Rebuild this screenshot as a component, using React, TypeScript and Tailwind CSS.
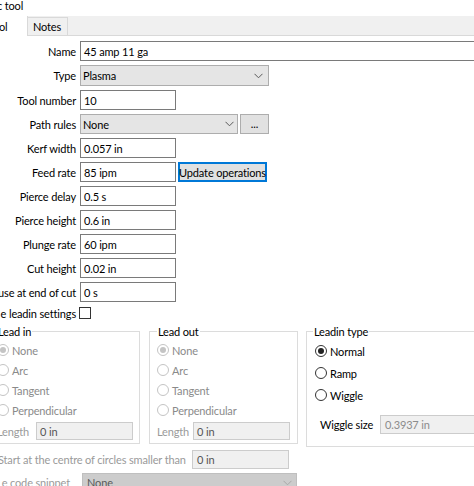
import React from "react";

function Chevron({ color = "#5a5a5a" }: { color?: string }) {
  return (
    <svg width="9" height="6" viewBox="0 0 9 6" className="shrink-0">
      <polyline points="0.5,0.8 4.5,4.8 8.5,0.8" fill="none" stroke={color} strokeWidth="1" />
    </svg>
  );
}

function Row({ label, children, tall }: { label: string; children: React.ReactNode; tall?: boolean }) {
  return (
    <div className={tall ? "flex items-center h-[21px]" : "flex items-center h-[20px]"}>
      <div className="w-[76px] shrink-0 flex justify-end whitespace-nowrap">
        <span>{label}</span>
      </div>
      <div className="ml-[4px] flex items-center">{children}</div>
    </div>
  );
}

function Input({ value, wide }: { value: string; wide?: boolean }) {
  return (
    <div
      className={
        wide
          ? "w-[400px] h-[20px] border border-[#7a7a7a] bg-white flex items-center pl-[3px] whitespace-nowrap"
          : "w-[96px] h-[20px] border border-[#7a7a7a] bg-white flex items-center pl-[3px] whitespace-nowrap"
      }
    >
      {value}
    </div>
  );
}

function Radio({ checked, disabled, label, tall }: { checked?: boolean; disabled?: boolean; label: string; tall?: boolean }) {
  return (
    <div className={tall ? "h-[22px] flex items-center" : "h-[20px] flex items-center"}>
      <span
        className={
          disabled
            ? "w-[12px] h-[12px] rounded-full border border-[#c4c4c4] bg-white flex items-center justify-center shrink-0"
            : "w-[12px] h-[12px] rounded-full border border-[#333333] bg-white flex items-center justify-center shrink-0"
        }
      >
        {checked && (
          <span className={disabled ? "w-[6px] h-[6px] rounded-full bg-[#c4c4c4]" : "w-[6px] h-[6px] rounded-full bg-[#222222]"} />
        )}
      </span>
      <span className={disabled ? "ml-[3px] text-[#8a8a8a]" : "ml-[3px] text-black"}>{label}</span>
    </div>
  );
}

function LeadGroup({ title, first }: { title: string; first?: boolean }) {
  return (
    <fieldset
      className={
        first
          ? "w-[151px] h-[120px] shrink-0 border border-[#dcdcdc] pl-[7px] pt-[1px]"
          : "w-[149px] h-[120px] shrink-0 border border-[#dcdcdc] pl-[7px] pt-[1px]"
      }
    >
      <legend className="px-[1px] leading-[15px] text-black">{title}</legend>
      <Radio checked disabled label="None" />
      <Radio disabled label="Arc" />
      <Radio disabled label="Tangent" />
      <Radio disabled label="Perpendicular" />
      <div className="mt-[2px] flex items-center h-[18px]">
        <span className={first ? "w-[39px] shrink-0 text-[#9a9a9a]" : "w-[36px] shrink-0 text-[#9a9a9a]"}>Length</span>
        <div className="w-[97px] h-[18px] border border-[#cccccc] bg-[#f0f0f0] flex items-center pl-[3px] text-[#555555]">
          0 in
        </div>
      </div>
    </fieldset>
  );
}

export default function App() {
  return (
    <div className="w-[474px] h-[486px] overflow-hidden bg-white text-[11px] tracking-[-0.15px] text-black font-['Lato',sans-serif] leading-[15px]">
      {/* title bar */}
      <div className="h-[18px] bg-white">
        <div className="ml-[-3px] mt-[-2px] whitespace-nowrap">c tool</div>
      </div>

      {/* tabs */}
      <div className="h-[20px] bg-[#f0f0f0] flex items-end border-b border-[#d9d9d9]">
        <div className="w-[28px] h-[20px] mb-[-1px] bg-white border-r border-[#d9d9d9] flex items-center">
          <span className="ml-[-1px]">ol</span>
        </div>
        <div className="w-[40px] h-[18px] border-t border-r border-[#d9d9d9] flex items-center pl-[5px]">Notes</div>
      </div>

      {/* form */}
      <div className="pt-[5px] flex flex-col gap-[4px]">
        <Row label="Name">
          <Input value="45 amp 11 ga" wide />
        </Row>
        <Row label="Type" tall>
          <div className="w-[189px] h-[21px] border border-[#adadad] bg-[#e5e5e5] flex items-center justify-between pl-[2px] pr-[5px]">
            <span>Plasma</span>
            <Chevron />
          </div>
        </Row>
        <Row label="Tool number">
          <Input value="10" />
        </Row>
        <Row label="Path rules">
          <div className="w-[158px] h-[20px] border border-[#adadad] bg-[#e5e5e5] flex items-center justify-between pl-[2px] pr-[3px]">
            <span>None</span>
            <Chevron />
          </div>
          <div className="ml-[2px] w-[29px] h-[20px] border border-[#adadad] bg-[#e1e1e1] flex items-center justify-center leading-[10px]">
            ...
          </div>
        </Row>
        <Row label="Kerf width">
          <Input value="0.057 in" />
        </Row>
        <Row label="Feed rate">
          <Input value="85 ipm" />
          <div className="ml-[2px] w-[89px] h-[20px] border-2 border-[#0078d7] bg-[#e1e1e1] flex items-center justify-center whitespace-nowrap">
            Update operations
          </div>
        </Row>
        <Row label="Pierce delay">
          <Input value="0.5 s" />
        </Row>
        <Row label="Pierce height">
          <Input value="0.6 in" />
        </Row>
        <Row label="Plunge rate">
          <Input value="60 ipm" />
        </Row>
        <Row label="Cut height">
          <Input value="0.02 in" />
        </Row>
        <Row label="use at end of cut">
          <Input value="0 s" />
        </Row>
        <div className="flex items-center h-[14px]">
          <div className="w-[76px] shrink-0 flex justify-end whitespace-nowrap">
            <span>e leadin settings</span>
          </div>
          <div className="ml-[3px] w-[12px] h-[12px] border border-[#333333] bg-white" />
        </div>
      </div>

      {/* group boxes */}
      <div className="mt-[4px] ml-[-11px] flex items-start">
        <LeadGroup title="Lead in" first />
        <div className="ml-[9px]">
          <LeadGroup title="Lead out" />
        </div>
        <fieldset className="ml-[8px] w-[190px] h-[123px] shrink-0 border border-[#dcdcdc] pl-[8px] pt-[1px]">
          <legend className="ml-[-2px] px-[1px] leading-[15px]">Leadin type</legend>
          <Radio checked label="Normal" tall />
          <Radio label="Ramp" tall />
          <Radio label="Wiggle" tall />
          <div className="mt-[9px] flex items-center h-[19px]">
            <span className="w-[65px] shrink-0 pl-[5px] whitespace-nowrap">Wiggle size</span>
            <div className="w-[110px] h-[19px] border border-[#cccccc] bg-[#f0f0f0] flex items-center pl-[4px] text-[#8c8c8c]">
              0.3937 in
            </div>
          </div>
        </fieldset>
      </div>

      {/* start at centre */}
      <div className="mt-[3px] ml-[-2px] flex items-center h-[19px]">
        <div className="w-[194px] shrink-0 whitespace-nowrap text-[#9a9a9a]">Start at the centre of circles smaller than</div>
        <div className="w-[97px] h-[19px] border border-[#cccccc] bg-[#f0f0f0] flex items-center pl-[4px] text-[#555555]">
          0 in
        </div>
      </div>

      {/* code snippet */}
      <div className="mt-[4px] flex items-center h-[19px]">
        <div className="w-[82px] shrink-0 flex justify-end pr-[12px] whitespace-nowrap text-[#9a9a9a]">
          <span>e code snippet</span>
        </div>
        <div className="w-[215px] h-[19px] border border-[#bfbfbf] bg-[#cccccc] flex items-center justify-between pl-[4px] pr-[4px] text-[#5a5a5a]">
          <span>None</span>
          <Chevron color="#a8a8a8" />
        </div>
      </div>
    </div>
  );
}
